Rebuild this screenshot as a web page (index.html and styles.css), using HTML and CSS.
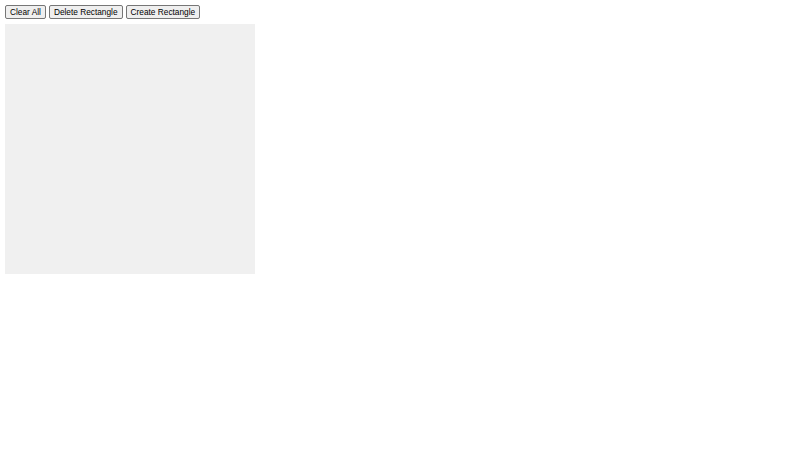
FILE: index.html
```html
<!DOCTYPE html>
<html>
<head>
<meta charset="utf-8">
<link rel="stylesheet" href="styles.css">
</head>
<body>
<div class="toolbar">
<button class="btn">Clear All</button>
<button class="btn">Delete Rectangle</button>
<button class="btn">Create Rectangle</button>
</div>
<div class="canvas"></div>
</body>
</html>
```
FILE: styles.css
```css
html, body { background: #fff; }
body {
  margin: 5px;
  font-family: "Liberation Sans", Arial, sans-serif;
}
.toolbar {
  display: flex;
  gap: 3px;
  height: 14px;
  margin-bottom: 5px;
}
.btn {
  font-family: "Liberation Sans", Arial, sans-serif;
  font-size: 8.3px;
  line-height: 12px;
  height: 14px;
  padding: 0 4px;
  margin: 0;
  color: #000;
  background: #efefef;
  border: 1px solid #767676;
  border-radius: 2px;
}
.canvas {
  width: 250px;
  height: 250px;
  background: #f0f0f0;
}
```
